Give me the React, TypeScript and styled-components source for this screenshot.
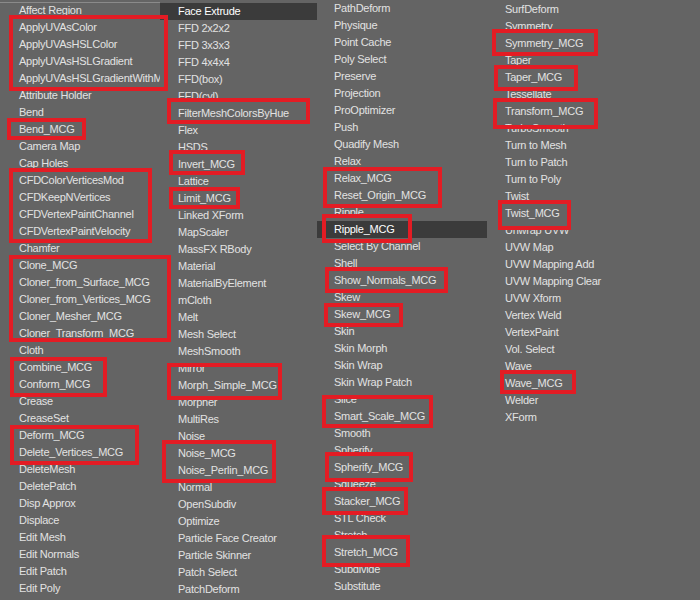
import * as React from "react";
import styled, { createGlobalStyle } from "styled-components";

const GlobalStyle = createGlobalStyle`
  html, body {
    margin: 0;
    padding: 0;
    background: #646464;
    overflow: hidden;
  }
`;

const ROW_HEIGHT = 17;

interface ColumnSpec {
  width: number;
  indent: number;
  offset: number;
  topLine?: boolean;
  selected?: string;
  items: string[];
}

const columns: ColumnSpec[] = [
  {
    width: 160,
    indent: 19,
    offset: 1.5,
    topLine: true,
    items: [
      "Affect Region",
      "ApplyUVAsColor",
      "ApplyUVAsHSLColor",
      "ApplyUVAsHSLGradient",
      "ApplyUVAsHSLGradientWithM",
      "Attribute Holder",
      "Bend",
      "Bend_MCG",
      "Camera Map",
      "Cap Holes",
      "CFDColorVerticesMod",
      "CFDKeepNVertices",
      "CFDVertexPaintChannel",
      "CFDVertexPaintVelocity",
      "Chamfer",
      "Clone_MCG",
      "Cloner_from_Surface_MCG",
      "Cloner_from_Vertices_MCG",
      "Cloner_Mesher_MCG",
      "Cloner_Transform_MCG",
      "Cloth",
      "Combine_MCG",
      "Conform_MCG",
      "Crease",
      "CreaseSet",
      "Deform_MCG",
      "Delete_Vertices_MCG",
      "DeleteMesh",
      "DeletePatch",
      "Disp Approx",
      "Displace",
      "Edit Mesh",
      "Edit Normals",
      "Edit Patch",
      "Edit Poly"
    ]
  },
  {
    width: 157,
    indent: 18,
    offset: 2.5,
    selected: "Face Extrude",
    items: [
      "Face Extrude",
      "FFD 2x2x2",
      "FFD 3x3x3",
      "FFD 4x4x4",
      "FFD(box)",
      "FFD(cyl)",
      "FilterMeshColorsByHue",
      "Flex",
      "HSDS",
      "Invert_MCG",
      "Lattice",
      "Limit_MCG",
      "Linked XForm",
      "MapScaler",
      "MassFX RBody",
      "Material",
      "MaterialByElement",
      "mCloth",
      "Melt",
      "Mesh Select",
      "MeshSmooth",
      "Mirror",
      "Morph_Simple_MCG",
      "Morpher",
      "MultiRes",
      "Noise",
      "Noise_MCG",
      "Noise_Perlin_MCG",
      "Normal",
      "OpenSubdiv",
      "Optimize",
      "Particle Face Creator",
      "Particle Skinner",
      "Patch Select",
      "PatchDeform"
    ]
  },
  {
    width: 170,
    indent: 17,
    offset: -0.5,
    selected: "Ripple_MCG",
    items: [
      "PathDeform",
      "Physique",
      "Point Cache",
      "Poly Select",
      "Preserve",
      "Projection",
      "ProOptimizer",
      "Push",
      "Quadify Mesh",
      "Relax",
      "Relax_MCG",
      "Reset_Origin_MCG",
      "Ripple",
      "Ripple_MCG",
      "Select By Channel",
      "Shell",
      "Show_Normals_MCG",
      "Skew",
      "Skew_MCG",
      "Skin",
      "Skin Morph",
      "Skin Wrap",
      "Skin Wrap Patch",
      "Slice",
      "Smart_Scale_MCG",
      "Smooth",
      "Spherify",
      "Spherify_MCG",
      "Squeeze",
      "Stacker_MCG",
      "STL Check",
      "Stretch",
      "Stretch_MCG",
      "Subdivide",
      "Substitute"
    ]
  },
  {
    width: 213,
    indent: 18,
    offset: 0.5,
    items: [
      "SurfDeform",
      "Symmetry",
      "Symmetry_MCG",
      "Taper",
      "Taper_MCG",
      "Tessellate",
      "Transform_MCG",
      "TurboSmooth",
      "Turn to Mesh",
      "Turn to Patch",
      "Turn to Poly",
      "Twist",
      "Twist_MCG",
      "Unwrap UVW",
      "UVW Map",
      "UVW Mapping Add",
      "UVW Mapping Clear",
      "UVW Xform",
      "Vertex Weld",
      "VertexPaint",
      "Vol. Select",
      "Wave",
      "Wave_MCG",
      "Welder",
      "XForm"
    ]
  }
];

// red annotation frames drawn over the list: [left, top, right, bottom]
const marks: [number, number, number, number][] = [
  [9, 15, 168, 91],
  [7, 118, 86, 140],
  [9, 168, 152, 243],
  [9, 255, 171, 342],
  [10, 357, 107, 397],
  [10, 425, 139, 465],
  [167, 98, 310, 124],
  [169, 150, 245, 175],
  [169, 187, 240, 209],
  [167, 363, 282, 400],
  [162, 440, 276, 483],
  [323, 167, 442, 208],
  [322, 214, 412, 243],
  [325, 267, 448, 293],
  [324, 303, 403, 327],
  [322, 395, 433, 428],
  [325, 452, 413, 482],
  [322, 487, 408, 515],
  [322, 535, 410, 567],
  [492, 29, 598, 56],
  [494, 65, 578, 91],
  [493, 98, 598, 129],
  [498, 200, 571, 230],
  [500, 370, 576, 394]
];

const Screen = styled.div`
  position: relative;
  width: 700px;
  height: 600px;
  overflow: hidden;
  background: #646464;
  display: flex;
  align-items: flex-start;
  font-family: "Liberation Sans", Arial, sans-serif;
  font-size: 11px;
  letter-spacing: -0.25px;
`;

const Column = styled.ul<{ $width: number; $offset: number; $topLine?: boolean }>`
  list-style: none;
  margin: ${(p) => p.$offset}px 0 0 0;
  padding: 0;
  width: ${(p) => p.$width}px;
  flex: none;
  box-sizing: border-box;
  overflow: hidden;
  box-shadow: ${(p) => (p.$topLine ? "inset 0 1px 0 #8a8a8a" : "none")};
`;

const Row = styled.li<{ $indent: number; $selected?: boolean }>`
  height: ${ROW_HEIGHT}px;
  line-height: ${ROW_HEIGHT}px;
  padding-left: ${(p) => p.$indent}px;
  white-space: nowrap;
  color: ${(p) => (p.$selected ? "#ffffff" : "#e2e2e2")};
  background: ${(p) => (p.$selected ? "#3b3b3b" : "transparent")};
`;

const Frame = styled.div`
  position: absolute;
  box-sizing: border-box;
  border: 4px solid #e31c24;
  pointer-events: none;
`;

export default function App() {
  return (
    <>
      <GlobalStyle />
      <Screen>
        {columns.map((col, ci) => (
          <Column
            key={ci}
            $width={col.width}
            $offset={col.offset}
            $topLine={col.topLine}
          >
            {col.items.map((item) => (
              <Row
                key={item}
                $indent={col.indent}
                $selected={item === col.selected}
              >
                {item}
              </Row>
            ))}
          </Column>
        ))}
        {marks.map(([l, t, r, b], i) => (
          <Frame
            key={i}
            style={{ left: l, top: t, width: r - l, height: b - t }}
          />
        ))}
      </Screen>
    </>
  );
}
